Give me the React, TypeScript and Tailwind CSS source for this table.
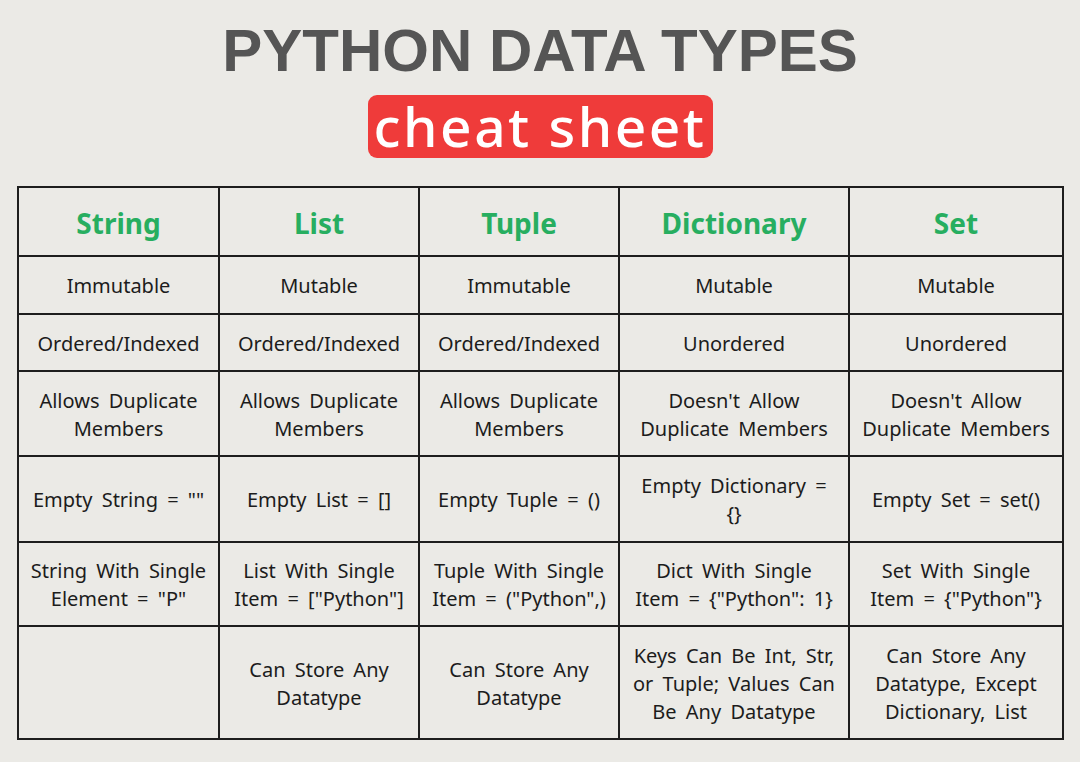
const headers = ["String", "List", "Tuple", "Dictionary", "Set"];

const rows: string[][] = [
  ["Immutable", "Mutable", "Immutable", "Mutable", "Mutable"],
  ["Ordered/Indexed", "Ordered/Indexed", "Ordered/Indexed", "Unordered", "Unordered"],
  [
    "Allows Duplicate Members",
    "Allows Duplicate Members",
    "Allows Duplicate Members",
    "Doesn't Allow Duplicate Members",
    "Doesn't Allow Duplicate Members",
  ],
  ['Empty String = ""', "Empty List = []", "Empty Tuple = ()", "Empty Dictionary =\n{}", "Empty Set = set()"],
  [
    'String With Single Element = "P"',
    'List With Single Item = ["Python"]',
    'Tuple With Single Item = ("Python",)',
    'Dict With Single\nItem = {"Python": 1}',
    'Set With Single Item = {"Python"}',
  ],
  [
    "",
    "Can Store Any Datatype",
    "Can Store Any Datatype",
    "Keys Can Be Int, Str,\nor Tuple; Values Can\nBe Any Datatype",
    "Can Store Any Datatype, Except Dictionary, List",
  ],
];

export default function App() {
  return (
    <div className="w-[1080px] h-[762px] bg-[#ebeae6] flex flex-col items-center overflow-hidden">
      <h1 className="mt-[21px] text-[60px] leading-[60px] font-black text-[#555555] font-['Liberation_Sans',sans-serif]">
        PYTHON DATA TYPES
      </h1>
      <div className="mt-[14px] w-[345px] h-[63px] rounded-[9px] bg-[#ef3b3a] flex items-center justify-center">
        <span className="text-white text-[55px] leading-none font-medium tracking-[2.5px] font-['Noto_Sans',sans-serif] -mt-[2px]">
          cheat sheet
        </span>
      </div>
      <div className="mt-[28px] self-start ml-[17px] grid grid-cols-[199px_198px_198px_228px_212px] grid-rows-[67px_56px_55px_83px_84px_82px_111px] gap-[2px] p-[2px] bg-[#1e1e1e] font-['Noto_Sans',sans-serif]">
        {headers.map((h) => (
          <div
            key={h}
            className="bg-[#ebeae6] flex items-center justify-center pt-[2px] text-[28px] font-bold text-[#27ae60]"
          >
            {h}
          </div>
        ))}
        {rows.flatMap((row, r) =>
          row.map((cell, c) => (
            <div
              key={`${r}-${c}`}
              className="bg-[#ebeae6] flex items-center justify-center text-center whitespace-pre-line px-[8px] pt-[2px] text-[20px] leading-[28px] text-[#1c1c1c] [word-spacing:4px]"
            >
              {cell}
            </div>
          ))
        )}
      </div>
    </div>
  );
}
